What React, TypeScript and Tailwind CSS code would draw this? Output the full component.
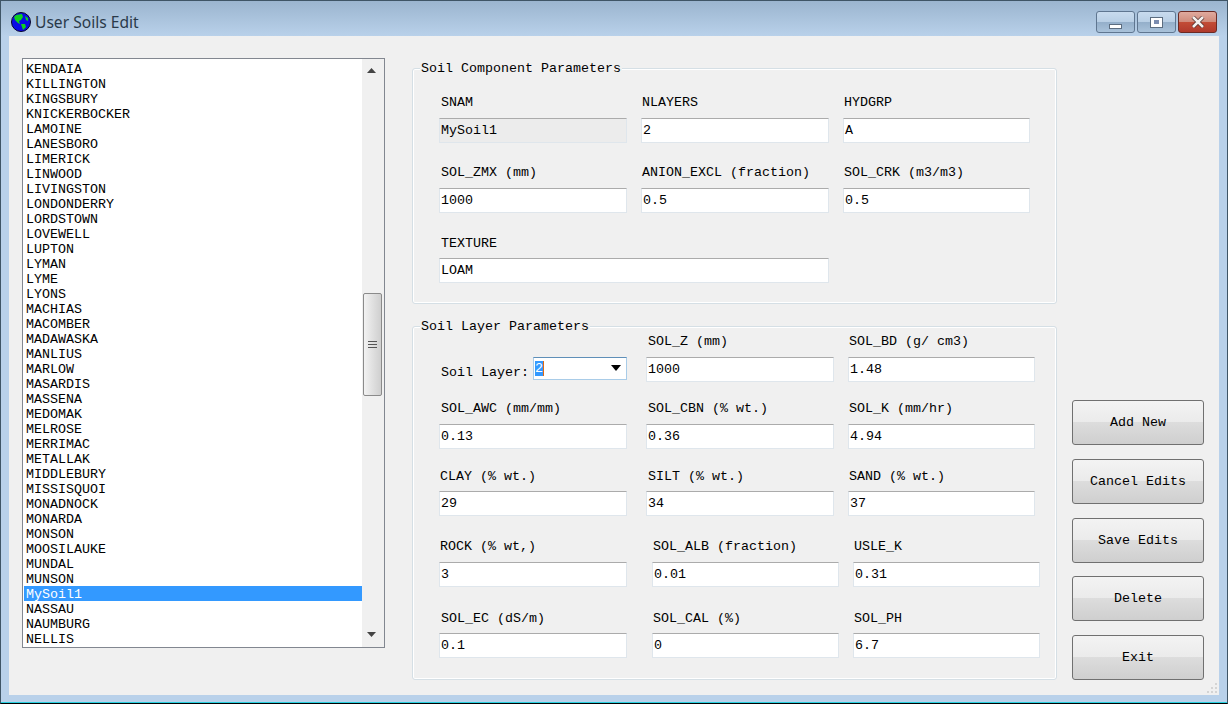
import type { ReactNode } from 'react';

const SOILS = [
  'KENDAIA', 'KILLINGTON', 'KINGSBURY', 'KNICKERBOCKER', 'LAMOINE', 'LANESBORO', 'LIMERICK', 'LINWOOD',
  'LIVINGSTON', 'LONDONDERRY', 'LORDSTOWN', 'LOVEWELL', 'LUPTON', 'LYMAN', 'LYME', 'LYONS', 'MACHIAS',
  'MACOMBER', 'MADAWASKA', 'MANLIUS', 'MARLOW', 'MASARDIS', 'MASSENA', 'MEDOMAK', 'MELROSE', 'MERRIMAC',
  'METALLAK', 'MIDDLEBURY', 'MISSISQUOI', 'MONADNOCK', 'MONARDA', 'MONSON', 'MOOSILAUKE', 'MUNDAL', 'MUNSON',
  'MySoil1', 'NASSAU', 'NAUMBURG', 'NELLIS',
];

const BUTTONS = ['Add New', 'Cancel Edits', 'Save Edits', 'Delete', 'Exit'];

function Globe() {
  return (
    <svg width="20" height="20" viewBox="0 0 20 20">
      <circle cx="10" cy="10" r="9.5" fill="#0a0ae6" stroke="#06062a" strokeWidth="1" />
      <path d="M5 3 L11 2 L12 5 L10 8 L8 9 L9 12 L7 11 L4 8 L3 5 Z" fill="#10d020" />
      <path d="M10 12 L14 12 L15 15 L12 18 L11 15 Z" fill="#10d020" />
      <path d="M14 4 L17 6 L17 9 L15 8 Z" fill="#10d020" />
    </svg>
  );
}

interface FieldProps {
  label: string;
  value: string;
  width?: string;
  gap?: string;
  tight?: boolean;
  disabled?: boolean;
}

function Field({ label, value, width = 'w-[188px]', gap = 'mt-[8px]', tight = false, disabled = false }: FieldProps) {
  return (
    <div className={`flex flex-col ${width}`}>
      <div className={`h-[16px] leading-[18px] whitespace-pre ${tight ? 'pl-[1px]' : 'pl-[2px]'}`}>{label}</div>
      <div
        className={`${gap} h-[25px] leading-[24px] pl-[1px] border border-[#dfe6ec] border-t-[#ababab] ${
          disabled ? 'bg-[#ececec]' : 'bg-white'
        }`}
      >
        {value}
      </div>
    </div>
  );
}

function WinButton({ className, children }: { className: string; children: ReactNode }) {
  return (
    <div className={`h-[22px] w-[39px] rounded-[3px] border flex items-center justify-center ${className}`}>
      {children}
    </div>
  );
}

export default function App() {
  return (
    <div className="w-[1228px] h-[704px] flex flex-col bg-[#b9d1ea] font-['Liberation_Mono',monospace] text-[13.33px] text-black border border-[#3f5566] border-b-black overflow-hidden">
      {/* title bar */}
      <div className="h-[35px] shrink-0 flex items-start pl-[10px] bg-gradient-to-b from-[#9bb5cf] to-[#b9d1ea]">
        <div className="mt-[11px]">
          <Globe />
        </div>
        <div className="ml-[4px] mt-[11px] text-[15.6px] leading-[20px] text-[#2a3a4a] font-['Noto_Sans',sans-serif]">User Soils Edit</div>
        <div className="ml-auto mt-[10px] mr-[10px] flex gap-[2px]">
          <WinButton className="border-[#5f7690] bg-[linear-gradient(to_bottom,#c8dbee_0%,#b9cfe5_48%,#94afca_52%,#a9c2da_100%)]">
            <div className="mt-[8px] w-[13px] h-[5px] bg-white border border-[#5c6d80]" />
          </WinButton>
          <WinButton className="border-[#5f7690] bg-[linear-gradient(to_bottom,#c8dbee_0%,#b9cfe5_48%,#94afca_52%,#a9c2da_100%)]">
            <div className="w-[13px] h-[11px] bg-white border border-[#5c6d80] flex items-center justify-center">
              <div className="w-[5px] h-[4px] bg-[#7c8db0]" />
            </div>
          </WinButton>
          <WinButton className="border-[#6b2a24] bg-[linear-gradient(to_bottom,#e0aa9e_0%,#d08c7c_48%,#c24c36_52%,#b03a2c_100%)]">
            <svg width="14" height="12" viewBox="0 0 14 12">
              <path d="M2 1 L12 11 M12 1 L2 11" stroke="#4a2a28" strokeWidth="4" />
              <path d="M2 1 L12 11 M12 1 L2 11" stroke="#f4f0ee" strokeWidth="2.6" />
            </svg>
          </WinButton>
        </div>
      </div>

      {/* client area */}
      <div className="relative flex-1 mx-[8px] mb-[7px] bg-[#f0f0f0] flex items-start">
        {/* soil list */}
        <div className="ml-[13px] mt-[22px] w-[363px] h-[590px] shrink-0 bg-white border border-[#828790] flex">
          <div className="flex-1 pt-[2px] pl-[1px]">
            {SOILS.map((s) => (
              <div
                key={s}
                className={`h-[15px] leading-[17px] pl-[2px] ${s === 'MySoil1' ? 'bg-[#3399ff] text-white' : ''}`}
              >
                {s}
              </div>
            ))}
          </div>
          <div className="w-[22px] bg-[#f0f0f0] flex flex-col items-start pl-[5px] relative">
            <svg className="mt-[9px]" width="9" height="5" viewBox="0 0 9 5">
              <path d="M4.5 0 L9 5 L0 5 Z" fill="#444" />
            </svg>
            <div className="absolute top-[234px] left-[1px] w-[19px] h-[103px] rounded-[2px] border border-[#8a8a8a] bg-gradient-to-r from-[#f2f2f2] to-[#cfcfcf] flex items-center justify-center">
              <div className="flex flex-col gap-[2px]">
                <div className="w-[9px] h-[1px] bg-[#555]" />
                <div className="w-[9px] h-[1px] bg-[#555]" />
                <div className="w-[9px] h-[1px] bg-[#555]" />
              </div>
            </div>
            <svg className="mt-auto mb-[10px]" width="9" height="5" viewBox="0 0 9 5">
              <path d="M0 0 L9 0 L4.5 5 Z" fill="#444" />
            </svg>
          </div>
        </div>

        {/* parameter groups */}
        <div className="ml-[27px] mt-[24px] w-[645px] shrink-0 flex flex-col gap-[14px]">
          <fieldset className="h-[244px] border border-[#d5dfe5] rounded-[3px] shadow-[inset_0_0_0_1px_#ffffff]">
            <legend className="ml-[7px] px-[1px] h-[16px] leading-[18px] bg-[#f0f0f0]">Soil Component Parameters</legend>
            <div className="ml-[26px] pt-[18px] flex flex-col">
              <div className="flex gap-[14px]">
                <Field label="SNAM" value="MySoil1" disabled />
                <Field label="NLAYERS" value="2" tight />
                <Field label="HYDGRP" value="A" width="w-[187px]" tight />
              </div>
              <div className="mt-[21px] flex gap-[14px]">
                <Field label="SOL_ZMX (mm)" value="1000" />
                <Field label="ANION_EXCL (fraction)" value="0.5" tight />
                <Field label="SOL_CRK (m3/m3)" value="0.5" width="w-[187px]" tight />
              </div>
              <div className="mt-[22px] flex">
                <Field label="TEXTURE" value="LOAM" width="w-[390px]" gap="mt-[7px]" />
              </div>
            </div>
          </fieldset>

          <fieldset className="h-[362px] border border-[#d5dfe5] rounded-[3px] shadow-[inset_0_0_0_1px_#ffffff]">
            <legend className="ml-[7px] px-[1px] h-[16px] leading-[18px] bg-[#f0f0f0]">Soil Layer Parameters</legend>
            <div className="ml-[26px] -mt-[1px] flex flex-col">
              <div className="flex gap-[14px] items-start">
                <div className="w-[193px] h-[49px] flex items-start">
                  <span className="pl-[2px] mt-[31px] leading-[18px] h-[16px] whitespace-pre">Soil Layer:</span>
                  <div className="ml-[4px] mt-[24px] w-[94px] h-[23px] bg-white border border-[#a9cce8] border-t-[#5f8fb8] flex items-center justify-between">
                    <span className="ml-[1px] mb-[1px] bg-[#3399ff] text-white leading-[15px] w-[9px] border-r border-[#e06a10]">2</span>
                    <svg className="mr-[5px] mb-[1px]" width="10" height="6" viewBox="0 0 10 6">
                      <path d="M0 0 L10 0 L5 6 Z" fill="#000" />
                    </svg>
                  </div>
                </div>
                <Field label="SOL_Z (mm)" value="1000" />
                <Field label="SOL_BD (g/ cm3)" value="1.48" width="w-[187px]" tight />
              </div>
              <div className="mt-[18px] flex gap-[19px]">
                <Field label="SOL_AWC (mm/mm)" value="0.13" />
                <div className="flex gap-[14px]">
                  <Field label="SOL_CBN (% wt.)" value="0.36" />
                  <Field label="SOL_K (mm/hr)" value="4.94" width="w-[187px]" tight />
                </div>
              </div>
              <div className="mt-[19px] flex gap-[19px]">
                <Field label="CLAY (% wt.)" value="29" gap="mt-[7px]" tight />
                <div className="flex gap-[14px]">
                  <Field label="SILT (% wt.)" value="34" gap="mt-[7px]" />
                  <Field label="SAND (% wt.)" value="37" width="w-[187px]" gap="mt-[7px]" tight />
                </div>
              </div>
              <div className="mt-[22px] flex gap-[25px]">
                <Field label="ROCK (% wt,)" value="3" tight />
                <div className="flex gap-[14px]">
                  <Field label="SOL_ALB (fraction)" value="0.01" width="w-[187px]" tight />
                  <Field label="USLE_K" value="0.31" width="w-[187px]" tight />
                </div>
              </div>
              <div className="mt-[23px] flex gap-[25px]">
                <Field label="SOL_EC (dS/m)" value="0.1" gap="mt-[7px]" />
                <div className="flex gap-[14px]">
                  <Field label="SOL_CAL (%)" value="0" width="w-[187px]" gap="mt-[7px]" tight />
                  <Field label="SOL_PH" value="6.7" width="w-[187px]" gap="mt-[7px]" tight />
                </div>
              </div>
            </div>
          </fieldset>
        </div>

        {/* action buttons */}
        <div className="ml-[15px] mt-[364px] w-[132px] shrink-0 flex flex-col gap-[13.75px]">
          {BUTTONS.map((b) => (
            <div
              key={b}
              className="h-[45px] pt-[1px] rounded-[3px] border border-[#707070] bg-[linear-gradient(to_bottom,#f3f3f3_0%,#ebebeb_48%,#dddddd_48%,#cfcfcf_100%)] flex items-center justify-center"
            >
              {b}
            </div>
          ))}
        </div>

        {/* resize grip */}
        <svg className="absolute right-[1px] bottom-[1px]" width="12" height="12" viewBox="0 0 12 12">
          <path d="M9 1h2v2H9zM5 5h2v2H5zM9 5h2v2H9zM1 9h2v2H1zM5 9h2v2H5zM9 9h2v2H9z" fill="#d4d4d4" />
        </svg>
      </div>
      <div className="h-[1px] shrink-0 bg-[#29d0e0]" />
    </div>
  );
}
